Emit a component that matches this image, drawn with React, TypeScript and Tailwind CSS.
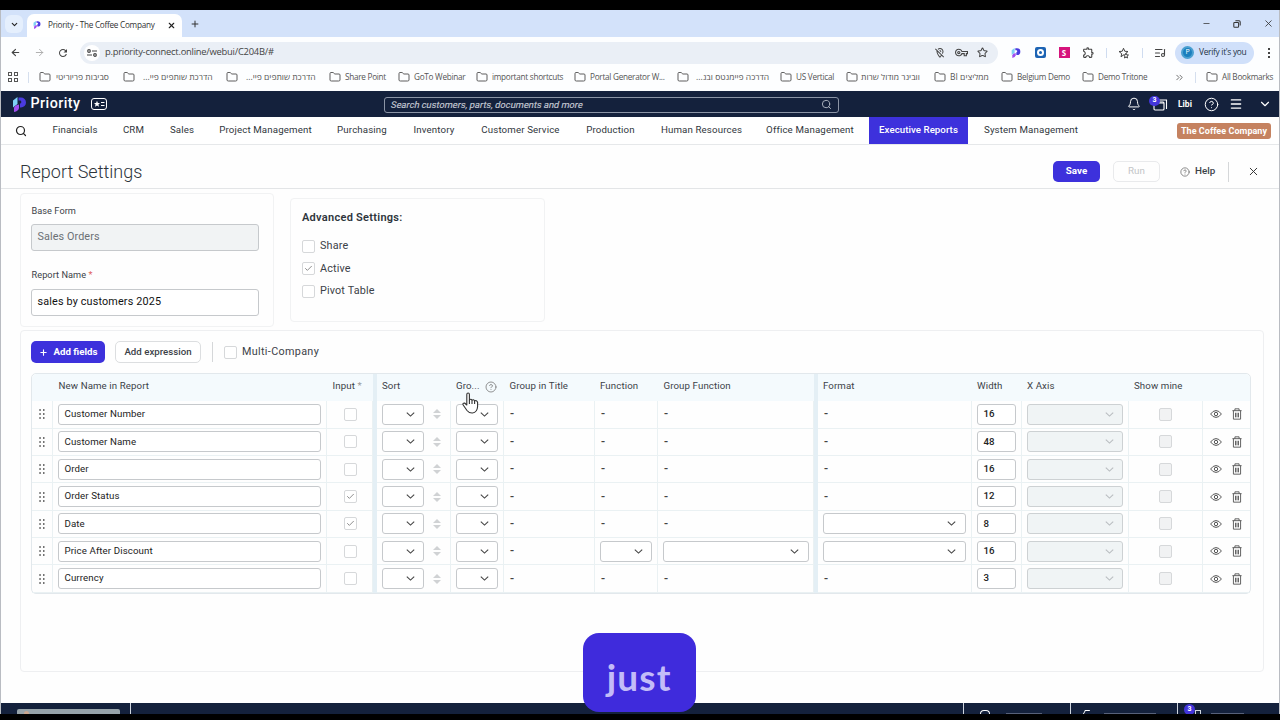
import React from 'react'
import clsx from 'clsx'
import {
	ArrowLeft,
	ArrowRight,
	Bell,
	Check,
	ChevronDown,
	ChevronsRight,
	CircleHelp,
	Folder,
	ListMusic,
	Menu,
	Minus,
	Plus,
	Search,
	Star,
	X
} from 'lucide-react'
import { MdOutlineExtension, MdOutlineLocationOff, MdOutlineVpnKey, MdRefresh } from 'react-icons/md'

const bookmarks = [
	{ name: 'סביבות פריוריטי', width: 'w-[84px]', rtl: true, gap: 'gap-[5px]' },
	{ name: 'הדרכת שותפים פיי...', width: 'w-[103px]', rtl: true, gap: 'gap-[8px]' },
	{ name: 'הדרכת שותפים פיי...', width: 'w-[103px]', rtl: true, gap: 'gap-[8px]' },
	{ name: 'Share Point', width: 'w-[69px]', gap: 'gap-[4px]' },
	{ name: 'GoTo Webinar', width: 'w-[78px]', gap: 'gap-[4px]' },
	{ name: 'important shortcuts', width: 'w-[98px]', gap: 'gap-[4px]' },
	{ name: 'Portal Generator W...', width: 'w-[103px]', gap: 'gap-[4px]' },
	{ name: 'הדרכה פיימנטס ובנ...', width: 'w-[103px]', rtl: true, gap: 'gap-[7px]' },
	{ name: 'US Vertical', width: 'w-[66px]', gap: 'gap-[4px]' },
	{ name: 'וובינר מודול שרות', width: 'w-[88px]', rtl: true, gap: 'gap-[3px]' },
	{ name: 'ממליצים BI', width: 'w-[67px]', rtl: true, gap: 'gap-[4px]' },
	{ name: 'Belgium Demo', width: 'w-[81px]', gap: 'gap-[4px]' },
	{ name: 'Demo Tritone', width: 'w-[92px]', gap: 'gap-[4px]' }
]

const menuItems = [
	{ name: 'Financials', width: 'w-[70px]' },
	{ name: 'CRM', width: 'w-[47px]' },
	{ name: 'Sales', width: 'w-[50px]' },
	{ name: 'Project Management', width: 'w-[117px]' },
	{ name: 'Purchasing', width: 'w-[76px]' },
	{ name: 'Inventory', width: 'w-[68px]' },
	{ name: 'Customer Service', width: 'w-[105px]' },
	{ name: 'Production', width: 'w-[75px]' },
	{ name: 'Human Resources', width: 'w-[107px]' },
	{ name: 'Office Management', width: 'w-[110px]' },
	{ name: 'Executive Reports', width: 'w-[99px] ml-[4px]', active: true },
	{ name: 'System Management', width: 'w-[126px]' }
]

const rows = [
	{ name: 'Customer Number', width: '16' },
	{ name: 'Customer Name', width: '48' },
	{ name: 'Order', width: '16' },
	{ name: 'Order Status', width: '12', input: true },
	{ name: 'Date', width: '8', input: true, format: true },
	{ name: 'Price After Discount', width: '16', format: true, fn: true },
	{ name: 'Currency', width: '3' }
]

const gridCols = 'grid grid-cols-[20.5px_274px_46.5px_4px_73.5px_53px_91px_63px_156.5px_4px_153.5px_50px_107px_74px_47.5px]'

const PriorityMark = ({ className }: { className?: string }) => (
	<svg viewBox="0 0 26 30" className={className}>
		<path d="M0 7 L9 0 V14 L0 21 Z" fill="#7fd0f5" />
		<path d="M11 1 H16 A10 10 0 0 1 16 21 H14 V13 H15 A3.5 3.5 0 0 0 15 7 H11 Z" fill="#4a3be0" />
		<path d="M2 22 Q3 16 12 15 V22 Q11 28 2 30 Z" fill="#a04df0" />
	</svg>
)

const Checkbox = ({ checked, disabled }: { checked?: boolean; disabled?: boolean }) => (
	<span
		className={clsx(
			'flex h-[13px] w-[13px] shrink-0 items-center justify-center rounded-[2px] border border-[#d6d8da]',
			disabled ? 'bg-[#f1f2f3]' : 'bg-white'
		)}>
		{checked && <Check className="h-[9px] w-[9px] text-[#777]" strokeWidth={2.2} />}
	</span>
)

const Select = ({ className, disabled }: { className?: string; disabled?: boolean }) => (
	<div
		className={clsx(
			'flex h-[21px] items-center justify-end rounded-[3px] border pr-[8.5px]',
			disabled ? 'border-[#cdd1d3] bg-[#f0f4f5] text-[#b9bdc0]' : 'border-[#c6c9cc] bg-white text-[#444]',
			className
		)}>
		<svg viewBox="0 0 9 5" className="h-[5px] w-[9px]" fill="none" stroke="currentColor" strokeWidth="1.1">
			<path d="M0.8 0.6 L4.5 4.1 L8.2 0.6" />
		</svg>
	</div>
)

const Cell = ({ children, className }: { children?: React.ReactNode; className?: string }) => (
	<div className={clsx('flex items-center border-r border-b border-[#eaf1f3] pl-[5.5px] pr-[4.5px]', className)}>{children}</div>
)

const Dash = () => <span className="ml-[1px] text-[12px] leading-none font-medium text-[#444]">-</span>

const DragHandle = () => (
	<svg viewBox="0 0 6 10" className="h-[10px] w-[6px]" fill="#444">
		<path d="M0.3 0.2 h1.5 v1.5 h-1.5 Z M4 0.2 h1.5 v1.5 h-1.5 Z M0.3 4.2 h1.5 v1.5 h-1.5 Z M4 4.2 h1.5 v1.5 h-1.5 Z M0.3 8.2 h1.5 v1.5 h-1.5 Z M4 8.2 h1.5 v1.5 h-1.5 Z" />
	</svg>
)

const EyeIcon = () => (
	<svg viewBox="0 0 12 8" className="h-[8px] w-[12px]" fill="none" stroke="#555" strokeWidth="1">
		<path d="M0.6 4 Q3 0.6 6 0.6 Q9 0.6 11.4 4 Q9 7.4 6 7.4 Q3 7.4 0.6 4 Z" />
		<circle cx="6" cy="4" r="1.7" />
	</svg>
)

const TrashIcon = () => (
	<svg viewBox="0 0 12 14" className="h-[12px] w-[10px]" fill="none" stroke="#555" strokeWidth="1.1">
		<path d="M0.5 3 H11.5 M3.5 3 V0.8 H8.5 V3 M1.7 3 V13.2 H10.3 V3 M4.2 5.5 V11 M6 5.5 V11 M7.8 5.5 V11" />
	</svg>
)

const BrowserChrome = () => (
	<>
		<div className="flex h-[27px] shrink-0 items-end bg-[#d3e2fa]">
			<div className="mb-[4px] ml-[4px] flex h-[18px] w-[18px] items-center justify-center rounded-[6px] bg-[#e5effd]">
				<ChevronDown className="h-[9px] w-[9px] text-[#222]" strokeWidth={3} />
			</div>
			<div className="ml-[4px] flex h-[23px] w-[155px] items-center rounded-t-[7px] bg-white pb-px pl-[6px]">
				<PriorityMark className="h-[8px] w-[8px]" />
				<span className="ml-[7px] w-[119px] whitespace-nowrap text-[8.2px] tracking-[-0.26px] text-[#333]">Priority - The Coffee Company</span>
				<X className="h-[9px] w-[9px] shrink-0 text-[#222]" strokeWidth={3} />
			</div>
			<Plus className="mb-[8px] ml-[8px] h-[10px] w-[10px] text-[#333]" strokeWidth={2.4} />
			<div className="mb-[8px] ml-auto flex items-center text-[#333]">
				<Minus className="h-[9px] w-[9px]" />
				<svg viewBox="0 0 10 10" className="ml-[22px] h-[8px] w-[8px]" fill="none" stroke="#333" strokeWidth="1.3">
					<rect x="1" y="3" width="6" height="6" rx="1" />
					<path d="M3 1 H7.5 Q9 1 9 2.5 V7" />
				</svg>
				<X className="ml-[22px] mr-[5px] h-[11px] w-[11px]" strokeWidth={1.8} />
			</div>
		</div>
		<div className="flex h-[30px] shrink-0 items-center bg-[#fdfeff] pt-px text-[#444]">
			<span className="flex w-[28px] justify-center"><ArrowLeft className="h-[11px] w-[11px]" strokeWidth={2.4} /></span>
			<span className="flex w-[20px] justify-center"><ArrowRight className="h-[11px] w-[11px] text-[#aaa]" strokeWidth={2} /></span>
			<span className="flex w-[28px] justify-center"><MdRefresh className="h-[12px] w-[12px]" /></span>
			<div className="ml-[3px] flex h-[22px] w-[918px] items-center rounded-full bg-[#eaeff6] pl-[4px] pr-[10px]">
				<span className="flex h-[16px] w-[16px] items-center justify-center rounded-full bg-white">
					<svg viewBox="0 0 10 8" className="h-[8px] w-[10px]" fill="none" stroke="#444" strokeWidth="1.2">
						<circle cx="2" cy="2" r="1.3" />
						<path d="M5 2 H10 M0 6 H5" />
						<circle cx="8" cy="6" r="1.3" />
					</svg>
				</span>
				<span className="ml-[5px] text-[9.4px] tracking-[-0.24px] text-[#444]">p.priority-connect.online/webui/C204B/#</span>
				<MdOutlineLocationOff className="ml-auto h-[12px] w-[12px]" />
				<MdOutlineVpnKey className="ml-[9px] h-[13px] w-[13px]" />
				<Star className="ml-[9px] h-[11px] w-[11px]" strokeWidth={2.2} />
			</div>
			<span className="ml-[5px] flex w-[25px] justify-center"><PriorityMark className="h-[10px] w-[10px]" /></span>
			<span className="flex w-[24px] justify-center">
				<span className="flex h-[11px] w-[11px] items-center justify-center rounded-[2px] bg-[#1d64b4]">
					<span className="h-[7px] w-[7px] rounded-full border-2 border-white bg-[#1d64b4]" />
				</span>
			</span>
			<span className="flex w-[24px] justify-center">
				<span className="flex h-[11px] w-[11px] items-center justify-center bg-[#d6147c] text-[8px] font-bold text-white">S</span>
			</span>
			<span className="flex w-[24px] justify-center"><MdOutlineExtension className="h-[13px] w-[13px]" /></span>
			<span className="flex w-[12px] justify-center"><span className="h-[10px] w-px bg-[#cfdcf0]" /></span>
			<span className="flex w-[24px] justify-center">
				<svg viewBox="0 0 24 24" className="h-[12px] w-[12px]" fill="none" stroke="#444" strokeWidth="2">
					<path d="M11 2.5 L13.5 8.5 L20 9 L15 13.5 M6 19.5 L7.5 13.5 L2 9 L8.5 8.5 L11 2.5 M6 19.5 L11 16" />
					<path d="M16 12.5 L17.3 15.6 L21 16 L18.2 18.2 L19 22 L16 20 L13 22 L13.8 18.2 L11 16 L14.7 15.6 Z" />
				</svg>
			</span>
			<span className="flex w-[12px] justify-center"><span className="h-[10px] w-px bg-[#cfdcf0]" /></span>
			<span className="flex w-[24px] justify-center"><ListMusic className="h-[12px] w-[12px]" strokeWidth={2.2} /></span>
			<div className="ml-[3px] flex h-[22px] w-[79px] items-center rounded-full bg-[#d0e0fa] pl-[6px]">
				<span className="flex h-[13px] w-[13px] items-center justify-center rounded-full border-2 border-[#4a9fd0] bg-[#1b7fbd] text-[7px] text-white">P</span>
				<span className="ml-[5px] whitespace-nowrap text-[8.4px] tracking-[-0.3px] text-[#234]">Verify it's you</span>
			</div>
			<div className="ml-[14px] flex flex-col gap-[2px]">
				<span className="h-[2px] w-[2px] bg-[#444]" />
				<span className="h-[2px] w-[2px] bg-[#444]" />
				<span className="h-[2px] w-[2px] bg-[#444]" />
			</div>
		</div>
		<div className="flex h-[24px] shrink-0 items-center bg-[#fdfeff] pb-[4px] text-[#555]">
			<div className="ml-[7px] grid grid-cols-2 gap-[2px]">
				{[0, 1, 2, 3].map(i => <span key={i} className="h-[4px] w-[4px] border border-[#555]" />)}
			</div>
			<span className="ml-[10px] mr-[10px] h-[11px] w-px bg-[#d5dfee]" />
			{bookmarks.map((item, index) => (
				<div key={index} className={clsx('flex shrink-0 items-center', item.width, item.gap)}>
					<Folder className="h-[12px] w-[12px] shrink-0" strokeWidth={1.9} />
					<span
						dir={item.rtl ? 'rtl' : 'ltr'}
						className={clsx('whitespace-nowrap', item.rtl ? 'text-[8.5px]' : 'text-[8.2px] tracking-[-0.27px]')}>
						{item.name}
					</span>
				</div>
			))}
			<ChevronsRight className="h-[11px] w-[11px] shrink-0" strokeWidth={1.8} />
			<span className="ml-[10px] mr-[10px] h-[11px] w-px shrink-0 bg-[#d5dfee]" />
			<Folder className="h-[12px] w-[12px] shrink-0" strokeWidth={1.9} />
			<span className="ml-[4px] whitespace-nowrap text-[8.2px] tracking-[-0.27px]">All Bookmarks</span>
		</div>
	</>
)

const TopBar = () => (
	<div className="flex h-[26px] shrink-0 items-center bg-[#14213c] text-white">
		<PriorityMark className="ml-[12px] h-[15px] w-[13px]" />
		<span className="ml-[4.5px] w-[49.5px] text-[14.3px] font-medium tracking-[0.45px]">Priority</span>
		<svg viewBox="0 0 16 12" className="ml-[11px] h-[12px] w-[16px]" fill="none" stroke="#fff">
			<rect x="0.5" y="0.5" width="15" height="11" rx="2.5" />
			<path d="M10 4.5 H13.5 M10 7.5 H13.5" />
			<path d="M6 2.8 L6.9 4.9 L9 5 L7.4 6.4 L8 8.7 L6 7.5 L4 8.7 L4.6 6.4 L3 5 L5.1 4.9 Z" fill="#fff" stroke="none" />
		</svg>
		<div className="ml-[277px] mt-px flex h-[16px] w-[455px] items-center justify-between rounded-[3px] border border-[#8b94a5] px-[6px]">
			<span className="inline-block -skew-x-12 pt-px text-[9.5px] font-medium tracking-[-0.15px] text-[#b4bac5]">Search customers, parts, documents and more</span>
			<Search className="h-[11px] w-[11px] text-[#b4bac5]" />
		</div>
		<Bell className="ml-[288px] h-[14px] w-[14px]" strokeWidth={1.7} />
		<div className="relative ml-[12px] h-[13px] w-[15px]">
			<svg viewBox="0 0 15 13" className="h-[13px] w-[15px]" fill="none" stroke="#fff" strokeWidth="1.1">
				<rect x="1" y="4" width="10" height="8" rx="1" />
				<path d="M3.5 2 H13.5 V11 M6 5 H11" />
			</svg>
			<span className="absolute -left-[4px] -top-[2px] flex h-[10px] w-[11px] items-center justify-center rounded-full bg-[#4335dc] text-[7px] font-bold">3</span>
		</div>
		<span className="ml-[10px] w-[15px] text-[8.5px] font-bold">Libi</span>
		<CircleHelp className="ml-[11px] h-[15px] w-[15px]" strokeWidth={1.6} />
		<Menu className="ml-[10px] h-[14px] w-[14px]" strokeWidth={2.2} />
		<ChevronDown className="ml-[15px] h-[14px] w-[14px]" strokeWidth={2} />
	</div>
)

const ModuleMenu = () => (
	<div className="flex h-[28px] shrink-0 items-stretch border-b border-[#e6e8ea] bg-white tracking-[0.14px] text-[#30363c]">
		<span className="flex w-[39px] items-center pl-[14px]"><Search className="h-[12px] w-[12px] text-[#222]" strokeWidth={2.4} /></span>
		{menuItems.map(item => (
			<span
				key={item.name}
				className={clsx(
					'flex shrink-0 items-center justify-center whitespace-nowrap text-[9.7px]',
					item.width,
					item.active && 'bg-[#3d31dc] font-medium tracking-[0.05px] text-white'
				)}>
				{item.name}
			</span>
		))}
		<span className="ml-auto mr-[8px] mt-[6px] flex h-[16px] w-[94px] items-center justify-center whitespace-nowrap rounded-[3px] bg-[#c58260] pt-px text-[9px] font-bold tracking-[0.05px] text-white">
			The Coffee Company
		</span>
	</div>
)

const PageHeader = () => (
	<div className="flex h-[44px] shrink-0 items-center border-b border-[#e3e5e7] bg-[#fefefe] pt-[10px]">
		<h1 className="ml-[19px] text-[18px] font-light tracking-[0.02px] text-[#2d343b]">Report Settings</h1>
		<button className="ml-auto h-[21px] w-[47px] rounded-[5px] bg-[#3d31dc] text-[9.8px] font-bold text-white">Save</button>
		<button className="ml-[13px] h-[21px] w-[47px] rounded-[5px] border border-[#e9eaec] text-[9.8px] text-[#c3c5c7]">Run</button>
		<CircleHelp className="ml-[20px] h-[10px] w-[10px] text-[#666]" strokeWidth={1.8} />
		<span className="ml-[5px] w-[20px] text-[9.8px] font-medium text-[#3c4248]">Help</span>
		<span className="ml-[13px] h-[20px] w-px bg-[#d5d7d9]" />
		<X className="ml-[18px] mr-[19px] h-[13px] w-[13px] text-[#333]" strokeWidth={1.8} />
	</div>
)

const SettingsCards = () => (
	<div className="flex shrink-0 items-start">
		<div className="mt-[4px] h-[134px] w-[254px] rounded-[4px] border border-[#f1f2f3] px-[10px] pt-[10px]">
			<p className="h-[14px] pl-[0.5px] text-[9.2px] leading-[14px] tracking-[0.05px] text-[#3c4248]">Base Form</p>
			<div className="mt-[6px] flex h-[27px] w-[228px] items-center rounded-[3px] border border-[#c6c9cc] bg-[#f1f3f4] px-[5.5px] text-[10.8px] tracking-[0.1px] text-[#6b7074]">
				Sales Orders
			</div>
			<p className="mt-[17px] h-[14px] pl-[0.5px] text-[9.2px] leading-[14px] tracking-[0.05px] text-[#3c4248]">
				Report Name <span className="text-[#e06060]">*</span>
			</p>
			<div className="mt-[7px] flex h-[27px] w-[228px] items-center rounded-[3px] border border-[#c6c9cc] bg-white px-[5.5px] text-[10.8px] tracking-[0.16px] text-[#111]">
				sales by customers 2025
			</div>
		</div>
		<div className="ml-[16px] mt-[9px] h-[124px] w-[255px] rounded-[4px] border border-[#f1f2f3] px-[11px] pt-[11px]">
			<p className="text-[11px] font-semibold leading-[15px] tracking-[0.28px] text-[#2d343b]">Advanced Settings:</p>
			<div className="mt-[10px] flex flex-col text-[10.8px] tracking-[0.15px] text-[#3c4248]">
				<label className="flex h-[22.6px] items-center gap-[5px]"><Checkbox />Share</label>
				<label className="flex h-[22.6px] items-center gap-[5px]"><Checkbox checked />Active</label>
				<label className="flex h-[22.6px] items-center gap-[5px]"><Checkbox />Pivot Table</label>
			</div>
		</div>
	</div>
)

const FieldsTable = () => (
	<div className="mt-[10px] w-[1220px] rounded-[5px] border border-[#e2e8ec] text-[9.7px] text-[#3c4248]">
		<div className={clsx(gridCols, 'h-[27.3px] items-center rounded-t-[5px] bg-[#f4fafd] pb-[2.4px] tracking-[0.1px]')}>
			<span />
			<span className="pl-[6px]">New Name in Report</span>
			<span className="pl-[6px]">Input <span className="text-[#999]">*</span></span>
			<span className="-mb-[2.4px] h-[27.3px] bg-[#e4eff5]" />
			<span className="pl-[5px]">Sort</span>
			<span className="flex items-center pl-[5.5px]">
				Gro...
				<CircleHelp className="ml-auto mr-[7px] mt-[2px] h-[12px] w-[12px] text-[#777]" strokeWidth={1.6} />
			</span>
			<span className="pl-[6px]">Group in Title</span>
			<span className="pl-[5.5px]">Function</span>
			<span className="pl-[6px]">Group Function</span>
			<span className="-mb-[2.4px] h-[27.3px] bg-[#e4eff5]" />
			<span className="pl-[5px]">Format</span>
			<span className="pl-[5.5px]">Width</span>
			<span className="pl-[5.5px]">X Axis</span>
			<span className="pl-[5.5px]">Show mine</span>
			<span />
		</div>
		{rows.map(row => (
			<div key={row.name} className={clsx(gridCols, 'h-[27.35px]')}>
				<Cell className="justify-center"><DragHandle /></Cell>
				<Cell>
					<div className="flex h-[21px] w-full items-center rounded-[3px] border border-[#c6c9cc] bg-white px-[5.5px] tracking-[0.1px] text-[#222]">{row.name}</div>
				</Cell>
				<Cell><span className="ml-[12px]"><Checkbox checked={row.input} /></span></Cell>
				<div className="bg-[#e4eff5]" />
				<div className="flex items-center border-r border-b border-[#eaf1f3] pl-[5px]">
					<Select className="w-[42px]" />
					<svg viewBox="0 0 8 10" className="ml-[9px] h-[10px] w-[8px]" fill="#d0d2d4">
						<path d="M4 0 L8 4 H0 Z M4 10 L8 6 H0 Z" />
					</svg>
				</div>
				<Cell><Select className="w-full" /></Cell>
				<Cell><Dash /></Cell>
				<Cell>{row.fn ? <Select className="w-full" /> : <Dash />}</Cell>
				<Cell>{row.fn ? <Select className="w-full" /> : <Dash />}</Cell>
				<div className="bg-[#e4eff5]" />
				<div className="flex items-center border-r border-b border-[#eaf1f3] pl-[5px] pr-[5px]">
					{row.format ? <Select className="w-full" /> : <Dash />}
				</div>
				<Cell>
					<div className="flex h-[21px] w-full items-center rounded-[3px] border border-[#c6c9cc] bg-white px-[5.5px] font-medium text-[#222]">{row.width}</div>
				</Cell>
				<Cell><Select className="w-full" disabled /></Cell>
				<Cell className="justify-center"><Checkbox disabled /></Cell>
				<div className="flex items-center border-b border-[#eaf1f3] pl-[7px]">
					<EyeIcon />
					<span className="ml-[10px]"><TrashIcon /></span>
				</div>
			</div>
		))}
	</div>
)

const StatusBar = () => (
	<div className="relative flex h-[11px] shrink-0 items-end overflow-hidden bg-[#14213c]">
		<span className="ml-[16px] h-[5px] w-[103px] rounded-t-[2px] bg-[#97a3a9] pl-[7px] pt-[2px]">
			<span className="block h-[3px] w-[5px] rounded-t-full bg-[#c9a68f]" />
		</span>
		<span className="ml-[10px] h-full w-px bg-[#cfd5de]" />
		<span className="ml-auto flex h-full w-[107px] items-end border-l border-[#cfd5de] pl-[16px]">
			<span className="h-[4px] w-[10px] rounded-t-full border border-b-0 border-white" />
			<span className="ml-[16px] h-px w-[36px] bg-[#57617a]" />
		</span>
		<span className="flex h-full w-[107px] items-end border-l border-[#cfd5de] pl-[13px]">
			<span className="h-[4px] w-[5px] skew-x-[-30deg] border-l border-t border-white" />
			<span className="ml-[15px] h-px w-[52px] bg-[#57617a]" />
		</span>
		<span className="flex h-full w-[102px] items-end border-l border-[#cfd5de] pl-[6px]">
			<span className="mb-[-1px] flex h-[11px] w-[11px] items-center justify-center rounded-full bg-[#4335dc] text-[7px] font-bold text-white">3</span>
			<span className="h-[4px] w-[6px] border border-b-0 border-[#cfd5de]" />
			<span className="ml-[10px] h-px w-[33px] bg-[#57617a]" />
		</span>
	</div>
)

const App = () => (
	<div className="relative flex h-[720px] w-[1280px] flex-col overflow-hidden bg-black pt-[10px] pb-[6px] font-[Roboto,'Liberation_Sans',sans-serif]">
		<div className="flex min-h-0 flex-1 flex-col border-x border-[#b9bcc2] bg-white">
			<div className="flex flex-col font-['Open_Sans','Noto_Sans','Liberation_Sans',sans-serif]">
				<BrowserChrome />
			</div>
			<TopBar />
			<ModuleMenu />
			<PageHeader />
			<div className="flex min-h-0 flex-1 flex-col bg-[#fefefe] pl-[19px]">
				<SettingsCards />
				<div className="mt-[3px] h-[342px] w-[1244px] rounded-[4px] border border-[#eeeff1] pl-[10px] pt-[10px]">
					<div className="flex h-[22px] items-center">
						<button className="flex h-[22px] w-[74px] items-center justify-center gap-[6px] rounded-[5px] bg-[#3d31dc] text-[9.7px] font-bold text-white">
							<Plus className="h-[9px] w-[9px]" strokeWidth={3} />
							Add fields
						</button>
						<button className="ml-[10px] h-[22px] w-[86px] rounded-[5px] border border-[#dcdee0] bg-white text-[9.7px] font-medium text-[#3c4248]">Add expression</button>
						<span className="ml-[11px] mr-[11px] h-[20px] w-px bg-[#d5d7d9]" />
						<label className="flex items-center gap-[5px] text-[10.8px] tracking-[0.33px] text-[#3c4248]"><Checkbox />Multi-Company</label>
					</div>
					<FieldsTable />
				</div>
			</div>
			<StatusBar />
		</div>
		<svg viewBox="0 0 17 22" className="absolute left-[462px] top-[392px] h-[22px] w-[17px]" fill="#fff" stroke="#333" strokeWidth="1.1" strokeLinejoin="round">
			<path d="M4.8 13 V2.5 Q4.8 1 6.1 1 Q7.4 1 7.4 2.5 V8 Q8.8 6.4 10 8.2 Q11.6 7 12.6 8.9 Q14.6 7.8 15.6 10.3 V14.5 Q15.2 20.5 10.5 21 Q7 21.2 5 18.5 L1 12.8 Q0.6 10.8 2.6 11 Z" />
			<path d="M7.4 8 V12 M10 8.2 V12 M12.6 9 V12" />
		</svg>
		<div className="absolute left-[582.5px] top-[632.5px] flex h-[79.5px] w-[113.5px] items-center justify-center rounded-[16px] bg-[#3f2bdc] pt-[8px] font-[Lato,sans-serif] text-[37px] font-bold tracking-[1.2px] text-[#c3bcf8]">
			just
		</div>
	</div>
)

export default App
